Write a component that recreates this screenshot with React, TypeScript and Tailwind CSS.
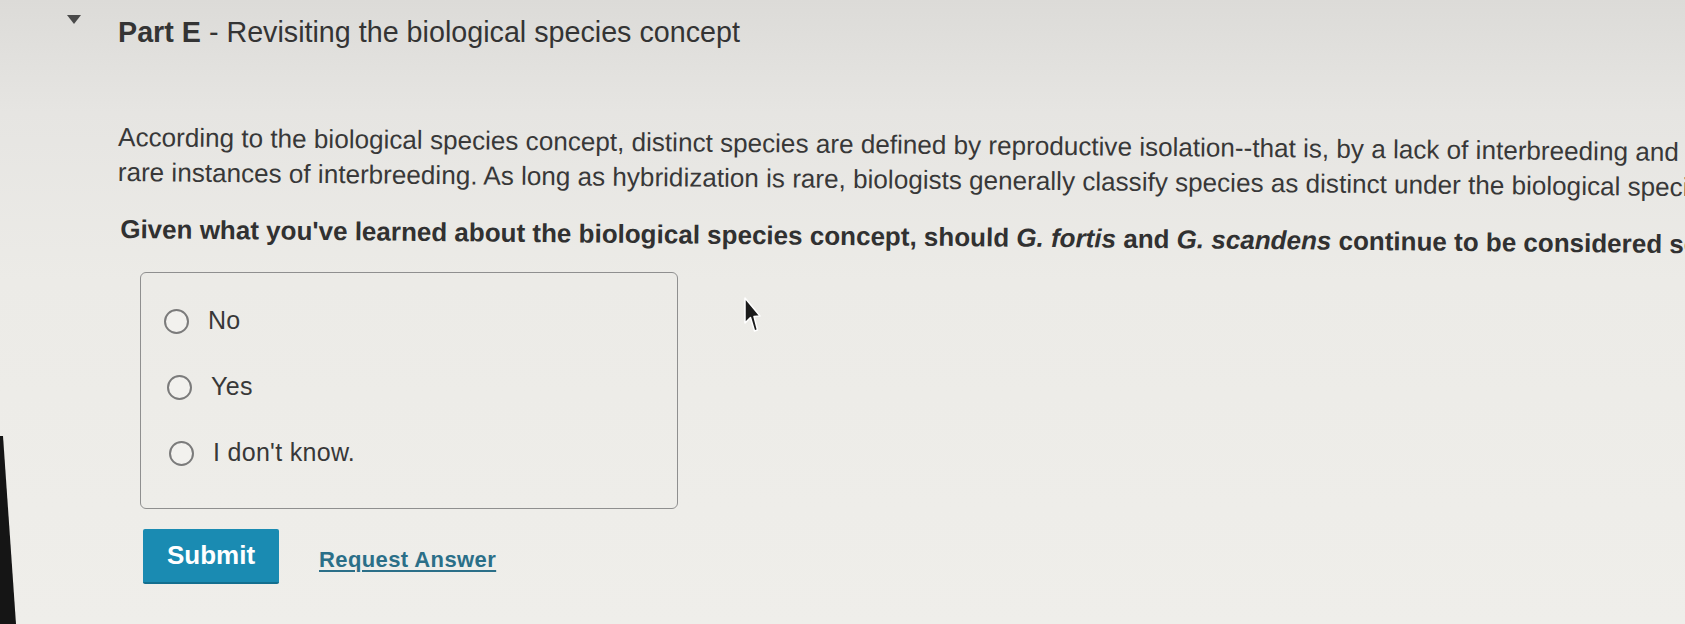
import React from "react";

const font = { fontFamily: '"Liberation Sans", Arial, sans-serif' };

function Radio({ label, indent }: { label: string; indent: string }) {
  return (
    <label className={`flex h-[66px] items-center gap-[19px] ${indent}`}>
      <span className="h-[25px] w-[25px] shrink-0 rounded-full border-2 border-[#7b7b7b] bg-[#f2f1ee]" />
      <span className="text-[25px] tracking-[0.3px] text-[#383838]">{label}</span>
    </label>
  );
}

function Cursor() {
  return (
    <svg
      className="absolute left-[742px] top-[296px]"
      width="20"
      height="40"
      viewBox="0 0 20 40"
    >
      <path
        d="M3 2 L3 27 L8.5 21.5 L12.5 35 L15.5 34 L12 20.5 L18 20 Z"
        fill="#1b1b1b"
        stroke="#ffffff"
        strokeWidth="1.5"
        strokeLinejoin="round"
      />
    </svg>
  );
}

export default function App() {
  return (
    <div
      className="relative h-[624px] w-[1685px] overflow-hidden bg-[linear-gradient(180deg,#dcdbd8_0%,#e6e5e2_18%,#ecebe7_45%,#efeeea_100%)] text-[#383838]"
      style={font}
    >
      {/* HEADER */}
      <div className="flex items-start pt-[15px]">
        <span className="ml-[67px] h-0 w-0 border-x-[7px] border-t-[9px] border-x-transparent border-t-[#4a4a4a]" />
        <h1 className="ml-[37px] mt-[3px] text-[28.7px] leading-[29px] text-[#343434]">
          <span className="font-bold">Part E</span> - Revisiting the biological species concept
        </h1>
      </div>

      {/* QUESTION */}
      <div className="origin-[119px_0px] rotate-[0.55deg] whitespace-nowrap pl-[119px] pt-[73px]">
        <p className="text-[26.1px] leading-[35px]">
          According to the biological species concept, distinct species are defined by reproductive isolation--that is, by a lack of interbreeding and only
          <br />
          rare instances of interbreeding. As long as hybridization is rare, biologists generally classify species as distinct under the biological species concept.
        </p>
        <p className="mt-[24px] pl-[3px] text-[26px] font-bold leading-[30px] text-[#313131]">
          Given what you've learned about the biological species concept, should <i>G. fortis</i> and <i>G. scandens</i> continue to be considered separate species?
        </p>
      </div>

      {/* ANSWERS */}
      <div className="ml-[140px] mt-[28px] w-[538px] rounded-[6px] border border-[#8f8f8f] pb-[22px] pl-[23px] pt-[15px]">
        <Radio label="No" indent="pl-0" />
        <Radio label="Yes" indent="pl-[3px]" />
        <Radio label="I don't know." indent="pl-[5px]" />
      </div>

      {/* ACTIONS */}
      <div className="ml-[143px] mt-[20px] flex items-center gap-[40px]">
        <button className="h-[55px] w-[136px] rounded-[2px] border-b-2 border-[#136f8f] bg-[#1a8bb2] text-[26px] font-bold text-white">
          Submit
        </button>
        <a className="mt-[5px] text-[22px] font-bold tracking-[0.4px] text-[#2b6f88] underline underline-offset-[3px]">
          Request Answer
        </a>
      </div>

      <Cursor />

      {/* screen bezel */}
      <svg className="absolute left-0 top-0" width="30" height="624">
        <polygon points="0,436 3,436 16,624 0,624" fill="#151515" />
      </svg>
    </div>
  );
}
